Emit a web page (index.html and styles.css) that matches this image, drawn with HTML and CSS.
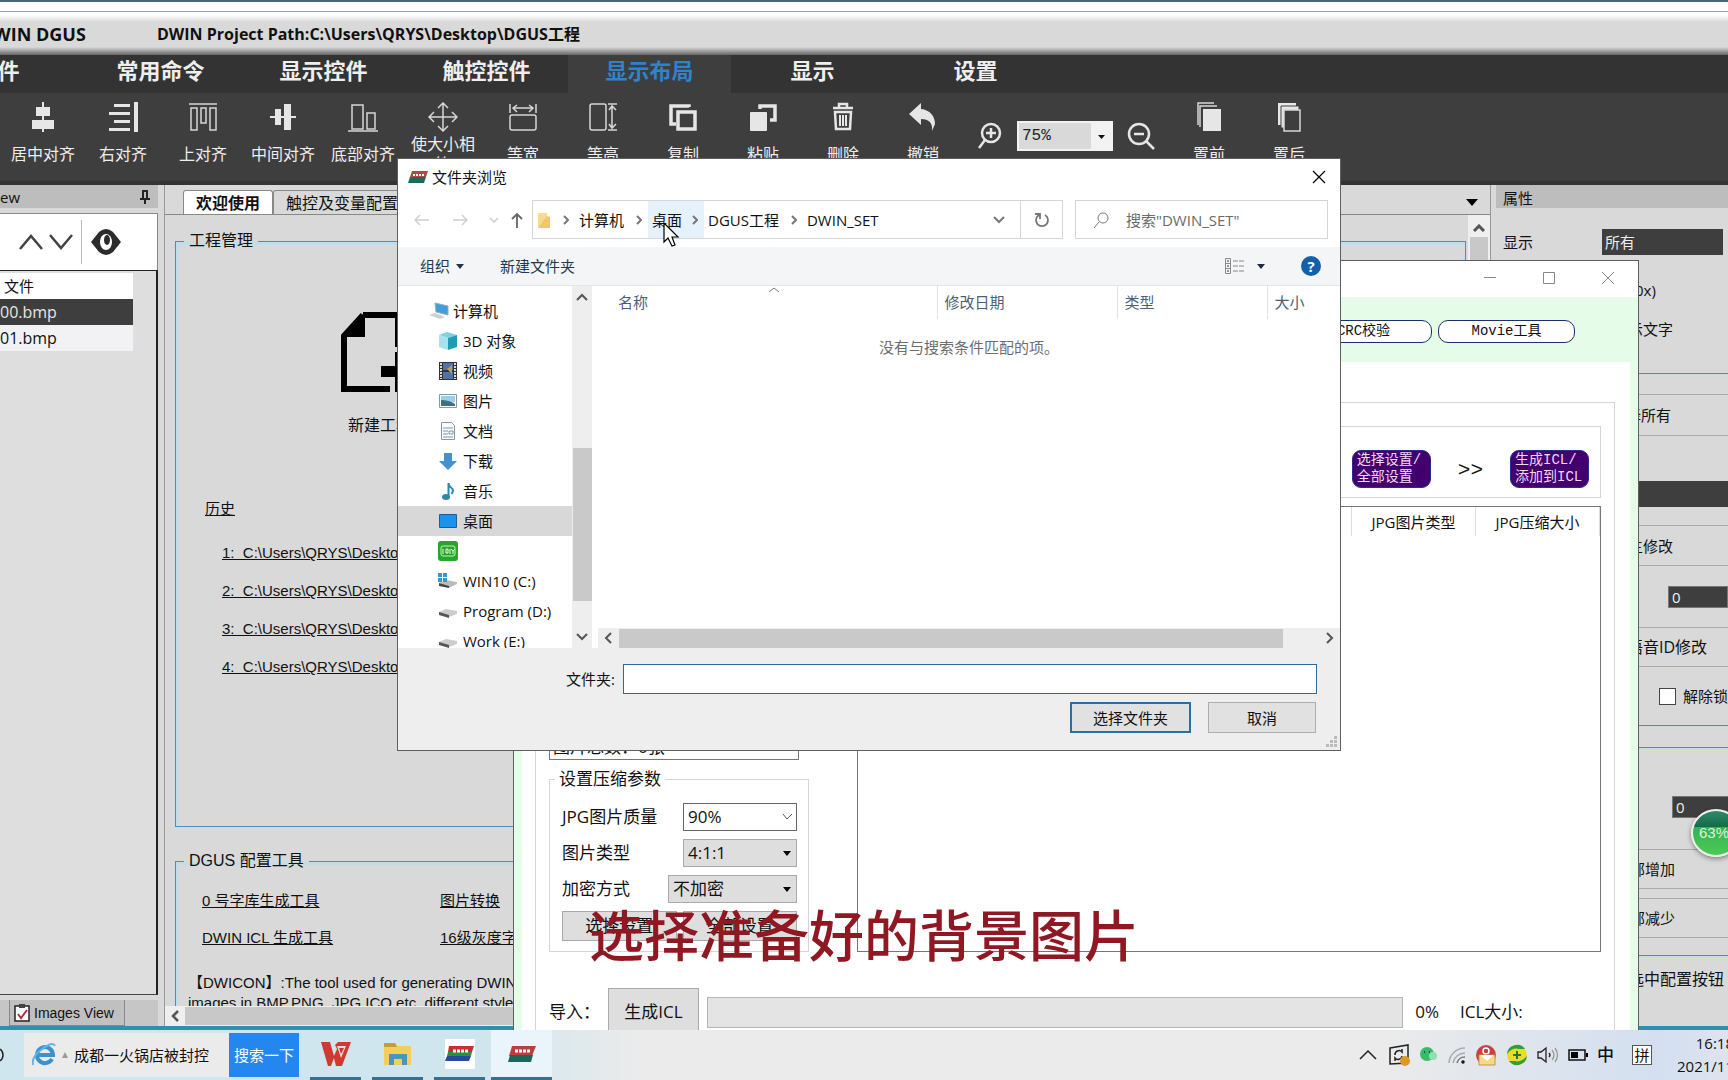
FILE: index.html
```
<!DOCTYPE html>
<html lang="zh-CN">
<head>
  <meta charset="UTF-8" />
  <meta name="viewport" content="width=device-width, initial-scale=1.0" />
  <title>DWIN DGUS</title>
  <link rel="stylesheet" href="styles.css">
</head>

<body>
  <div class="desktop">
    <!-- main DGUS window -->
    <div class="app">
      <div class="app-top"></div>
      <header class="app-title">
        <span class="app-name">DWIN DGUS</span>
        <span class="app-path">DWIN Project Path:C:\Users\QRYS\Desktop\DGUS工程</span>
      </header>

      <nav class="menu">
        <button>文件</button>
        <button>常用命令</button>
        <button>显示控件</button>
        <button>触控控件</button>
        <button class="active">显示布局</button>
        <button>显示</button>
        <button>设置</button>
      </nav>

      <div class="toolbar">
        <button class="tool">
          <svg width="30" height="30" viewBox="0 0 30 30"><path d="M15 0v30" stroke="#e6e6e6" stroke-width="2"/><path d="M8 5h14v9H8zM4 18h22v9H4z" fill="#e6e6e6"/></svg>
          <span>居中对齐</span>
        </button>
        <button class="tool">
          <svg width="30" height="30" viewBox="0 0 30 30" fill="#e6e6e6"><path d="M26 0h4v30h-4zM6 2h16v3H6zM1 10h21v3H1zM6 18h16v3H6zM1 26h21v3H1z"/></svg>
          <span>右对齐</span>
        </button>
        <button class="tool">
          <svg width="30" height="30" viewBox="0 0 30 30" fill="none" stroke="#d6d6d6" stroke-width="1.5"><path d="M1 2h28M3 6h6v22H3zM13 6h5v15h-5zM22 6h6v22h-6z"/></svg>
          <span>上对齐</span>
        </button>
        <button class="tool">
          <svg width="30" height="30" viewBox="0 0 30 30"><path d="M2 15h26" stroke="#e6e6e6" stroke-width="2"/><path d="M7 7h6v16H7zM16 2h7v26h-7z" fill="#e6e6e6"/></svg>
          <span>中间对齐</span>
        </button>
        <button class="tool">
          <svg width="30" height="30" viewBox="0 0 30 30" fill="none" stroke="#d6d6d6" stroke-width="1.5"><path d="M0 29h30M4 3h11v24H4zM19 11h8v16h-8z"/></svg>
          <span>底部对齐</span>
        </button>
        <button class="tool">
          <svg width="30" height="30" viewBox="0 0 30 30" fill="none" stroke="#d6d6d6" stroke-width="1.5"><path d="M15 1v28M1 15h28M10 6l5-5 5 5M10 24l5 5 5-5M6 10l-5 5 5 5M24 10l5 5-5 5"/></svg>
          <span>使大小相等</span>
        </button>
        <button class="tool">
          <svg width="30" height="30" viewBox="0 0 30 30" fill="none" stroke="#d6d6d6" stroke-width="1.5"><path d="M2 2v9M28 2v9M5 6h20M9 3L5 6l4 4M21 3l4 3-4 4"/><rect x="2" y="13" width="26" height="15" rx="2"/></svg>
          <span>等宽</span>
        </button>
        <button class="tool">
          <svg width="30" height="30" viewBox="0 0 30 30" fill="none" stroke="#d6d6d6" stroke-width="1.5"><rect x="2" y="2" width="16" height="26" rx="2"/><path d="M20 2h9M20 28h9M24 4v22M21 8l3-4 4 4M21 22l3 4 4-4"/></svg>
          <span>等高</span>
        </button>
        <button class="tool">
          <svg width="30" height="30" viewBox="0 0 30 30" fill="none" stroke="#e6e6e6"><path d="M21 5V4H3v18h5" stroke-width="3.5"/><path d="M10 10h17v17H10z" stroke-width="3.5"/></svg>
          <span>复制</span>
        </button>
        <button class="tool">
          <svg width="30" height="30" viewBox="0 0 30 30"><path d="M12 7V4h15v14h-5" fill="none" stroke="#e6e6e6" stroke-width="3.5"/><rect x="2" y="10" width="17" height="19" rx="1" fill="#e6e6e6"/></svg>
          <span>粘贴</span>
        </button>
        <button class="tool">
          <svg width="30" height="30" viewBox="0 0 30 30" fill="none" stroke="#e6e6e6" stroke-width="2"><path d="M11 5V2h8v3M5 6h20M7 10h16l-1 17H8z" stroke-width="2.5"/><path d="M12 13v11M15 13v11M18 13v11"/></svg>
          <span>删除</span>
        </button>
        <button class="tool">
          <svg width="30" height="30" viewBox="0 0 30 30" fill="#e6e6e6"><path d="M1 12L13 1v6c9 1 14 7 14 15l-3 7c1-8-3-12-11-12v6z"/></svg>
          <span>撤销</span>
        </button>

        <div class="zoom">
          <button class="zoom-btn" aria-label="放大">
            <svg width="26" height="28" viewBox="0 0 26 28" fill="none" stroke="#e6e6e6" stroke-width="2.5"><circle cx="14" cy="11" r="9"/><path d="M14 6v10M9 11h10M8 18l-6 8"/></svg>
          </button>
          <span class="combo">
            <select class="zoom-select" aria-label="缩放"><option>75%</option></select>
            <svg width="22" height="26" viewBox="0 0 22 26"><path d="M0 0h22v26H0z" fill="#f2f2f2"/><path d="M7 12h7l-3.500 4z" fill="#111"/></svg>
          </span>
          <button class="zoom-btn" aria-label="缩小">
            <svg width="28" height="28" viewBox="0 0 28 28" fill="none" stroke="#e6e6e6" stroke-width="2.500"><circle cx="12" cy="12" r="10"/><path d="M7 12h10M19 19l8 8"/></svg>
          </button>
        </div>

        <button class="tool">
          <svg width="30" height="30" viewBox="0 0 30 30"><path d="M4 23V1h16M6 25V4h17" fill="none" stroke="#d6d6d6" stroke-width="1.5"/><path d="M9 7h18v22H9z" fill="#e6e6e6"/></svg>
          <span>置前</span>
        </button>
        <button class="tool">
          <svg width="30" height="30" viewBox="0 0 30 30"><path d="M4 1h18v22H4z" fill="#e6e6e6"/><path d="M7 4h18v22H7z" fill="#e6e6e6" stroke="#3e3e3e"/><path d="M10 8h16v21H10z" fill="#3e3e3e" stroke="#d6d6d6" stroke-width="1.5"/></svg>
          <span>置后</span>
        </button>
      </div>

      <main class="work">
        <!-- image list -->
        <section class="images">
          <div class="dock-head">
            <span>ew</span>
            <svg width="10" height="14" viewBox="0 0 10 14" fill="none" stroke="#222" stroke-width="2"><path d="M3 8V1h4v7M0 9h10M5 9v5"/></svg>
          </div>
          <div class="image-tools">
            <button aria-label="上移"><svg width="24" height="16" viewBox="0 0 24 16" fill="none" stroke="#444" stroke-width="2.5"><path d="M1 15L12 2l11 13"/></svg></button>
            <button aria-label="下移"><svg width="24" height="16" viewBox="0 0 24 16" fill="none" stroke="#444" stroke-width="2.5"><path d="M1 1l11 13L23 1"/></svg></button>
            <i class="sep"></i>
            <button aria-label="预览"><svg width="30" height="26" viewBox="0 0 30 26"><path d="M0 13L8 3q7-6 14 0l8 10-8 10q-7 6-14 0z" fill="#2c2c2c"/><ellipse cx="15" cy="13" rx="6" ry="8" fill="#fff"/><ellipse cx="16" cy="11" rx="3" ry="5" fill="#2c2c2c"/></svg></button>
          </div>
          <div class="image-list">
            <table>
              <thead><tr><th>文件</th></tr></thead>
              <tbody>
                <tr class="selected"><td>00.bmp</td></tr>
                <tr><td>01.bmp</td></tr>
              </tbody>
            </table>
          </div>
          <div class="dock-tabs">
            <button>
              <svg width="16" height="18" viewBox="0 0 16 18"><rect x="1" y="2" width="14" height="15" fill="#fff" stroke="#222" stroke-width="1.5"/><path d="M5 0h6v4H5z" fill="#444"/><path d="M4 10l3 4 6-8" fill="none" stroke="#a33" stroke-width="2"/></svg>
              Images View
            </button>
          </div>
        </section>

        <!-- welcome page -->
        <section class="center">
          <div class="page-tabs">
            <button class="active">欢迎使用</button>
            <button>触控及变量配置</button>
            <svg width="12" height="7" viewBox="0 0 12 7"><path d="M0 0h12L6 7z" fill="#000"/></svg>
          </div>
          <div class="page">
            <div class="page-body">
              <fieldset class="box project">
                <legend>工程管理</legend>
                <button class="new-project">
                  <svg width="78" height="80" viewBox="0 0 78 80"><path d="M22 3L3 24v53h46M22 3h35v32" fill="none" stroke="#000" stroke-width="6"/><path d="M0 25L22 2h2v23z"/><path d="M54 40h11v14h13v11H65v15H54V65H40V54h14z"/></svg>
                  <span>新建工程</span>
                </button>
                <a class="history" href="#">历史</a>
                <ul class="recent">
                  <li><a href="#">1:&nbsp; C:\Users\QRYS\Desktop</a></li>
                  <li><a href="#">2:&nbsp; C:\Users\QRYS\Desktop</a></li>
                  <li><a href="#">3:&nbsp; C:\Users\QRYS\Desktop</a></li>
                  <li><a href="#">4:&nbsp; C:\Users\QRYS\Desktop</a></li>
                </ul>
              </fieldset>

              <fieldset class="box config">
                <legend>DGUS 配置工具</legend>
                <div class="links">
                  <a href="#">0 号字库生成工具</a>
                  <a href="#">图片转换</a>
                  <a href="#">DWIN ICL 生成工具</a>
                  <a href="#">16级灰度字</a>
                </div>
                <p>【DWICON】:The tool used for generating DWIN<br>images in BMP,PNG, JPG,ICO etc. different styles</p>
              </fieldset>
            </div>
            <div class="page-vscroll">
              <svg width="12" height="8" viewBox="0 0 12 8" fill="none" stroke="#555" stroke-width="3"><path d="M1 7l5-5 5 5"/></svg>
              <i></i>
            </div>
          </div>
          <div class="page-hscroll">
            <svg width="8" height="12" viewBox="0 0 8 12" fill="none" stroke="#555" stroke-width="2.500"><path d="M7 1L2 6l5 5"/></svg>
            <i></i>
          </div>
        </section>

        <!-- properties -->
        <aside class="props">
          <h2>属性</h2>
          <div class="prop show">
            <label for="show">显示</label>
            <select id="show"><option>所有</option></select>
          </div>
          <div class="prop scale">0x)</div>
          <div class="prop txt">示文字</div>
          <div class="rule blue"></div>
          <button class="prop bar all">择所有</button>
          <div class="prop dark"><span></span></div>
          <button class="prop bar edit">主修改</button>
          <div class="prop num"><input type="text" value="0" aria-label="数值"></div>
          <button class="prop bar voice">语音ID修改</button>
          <div class="prop lock"><input type="checkbox" id="lock"><label for="lock">解除锁定</label></div>
          <div class="rule blue"></div>
          <div class="rule blue second"></div>
          <div class="prop num2"><input type="text" value="0" aria-label="步长"></div>
          <button class="prop bar inc">部增加</button>
          <button class="prop bar dec">部减少</button>
          <div class="rule blue third"></div>
          <div class="prop choose">选中配置按钮</div>
        </aside>
      </main>
    </div>

    <!-- ICL tool window -->
    <section class="window tool-window">
      <div class="caption-bar">
        <button aria-label="最小化"><svg width="12" height="12" viewBox="0 0 12 12" stroke="#888"><path d="M0 5.500h12"/></svg></button>
        <button aria-label="最大化"><svg width="12" height="12" viewBox="0 0 12 12" fill="none" stroke="#888"><path d="M.5.5h11v11H.5z"/></svg></button>
        <button aria-label="关闭"><svg width="12" height="12" viewBox="0 0 12 12" stroke="#888"><path d="M0 0l12 12M12 0L0 12"/></svg></button>
      </div>
      <div class="ribbon">
        <button>CRC校验</button>
        <button>Movie工具</button>
      </div>
      <div class="tool-body">
        <div class="tool-panel">
          <div class="steps">
            <button>选择设置/<br>全部设置</button>
            <span>&gt;&gt;</span>
            <button>生成ICL/<br>添加到ICL</button>
          </div>
          <div class="tool-main">
            <div class="tool-left">
              <div class="total">图片总数：0张</div>
              <fieldset class="params">
                <legend>设置压缩参数</legend>
                <div class="param">
                  <label for="quality">JPG图片质量</label>
                  <span class="combo">
                    <select id="quality" class="white"><option>90%</option></select>
                    <svg width="20" height="8" viewBox="0 0 20 8" fill="none" stroke="#555"><path d="M6 1l4 5 5-5"/></svg>
                  </span>
                </div>
                <div class="param">
                  <label for="kind">图片类型</label>
                  <span class="combo">
                    <select id="kind"><option>4:1:1</option></select>
                    <svg width="20" height="8" viewBox="0 0 20 8"><path d="M6 2h8l-4 5z"/></svg>
                  </span>
                </div>
                <div class="param">
                  <label for="encrypt">加密方式</label>
                  <span class="combo wide">
                    <select id="encrypt"><option>不加密</option></select>
                    <svg width="20" height="8" viewBox="0 0 20 8"><path d="M6 2h8l-4 5z"/></svg>
                  </span>
                </div>
                <div class="param-buttons">
                  <button>选择设置</button>
                  <button>全部设置</button>
                </div>
              </fieldset>
            </div>
            <div class="jpg-list">
              <table>
                <thead><tr><th></th><th>JPG图片类型</th><th>JPG压缩大小</th></tr></thead>
              </table>
            </div>
          </div>
          <div class="import">
            <span class="import-label">导入：</span>
            <button>生成ICL</button>
            <div class="progress"></div>
            <span>0%</span>
            <span class="size">ICL大小:</span>
          </div>
        </div>
      </div>
    </section>

    <!-- folder picker -->
    <section class="window dialog">
      <div class="dialog-title">
        <svg width="20" height="12" viewBox="0 0 20 12"><path d="M4 0h16l-2 6H2z" fill="#b04a3a"/><path d="M2 6h16l-2 6H0z" fill="#1c6a5c"/><path d="M5 4h11" stroke="#fff" stroke-width="2" stroke-dasharray="2 1"/></svg>
        <span>文件夹浏览</span>
        <button aria-label="关闭"><svg width="14" height="14" viewBox="0 0 14 14" stroke="#000" stroke-width="1.2"><path d="M1 1l12 12M13 1L1 13"/></svg></button>
      </div>

      <div class="dialog-nav">
        <button class="nav-btn" aria-label="后退"><svg width="16" height="12" viewBox="0 0 16 12" fill="none" stroke="#d0d0d0" stroke-width="1.500"><path d="M15 6H1M6 1L1 6l5 5"/></svg></button>
        <button class="nav-btn" aria-label="前进"><svg width="16" height="12" viewBox="0 0 16 12" fill="none" stroke="#d0d0d0" stroke-width="1.500"><path d="M1 6h14M10 1l5 5-5 5"/></svg></button>
        <button class="nav-small" aria-label="最近"><svg width="8" height="6" viewBox="0 0 8 6" fill="none" stroke="#ccc" stroke-width="1.500"><path d="M0 1l4 4 4-4"/></svg></button>
        <button class="nav-up" aria-label="上一级"><svg width="12" height="16" viewBox="0 0 12 16" fill="none" stroke="#666" stroke-width="1.800"><path d="M6 16V2M1 7l5-5 5 5"/></svg></button>
        <div class="address">
          <svg width="14" height="16" viewBox="0 0 14 16"><path d="M1 1h9v15H1z" fill="#f7dd8b"/><path d="M10 4l3 1v11H1z" fill="#efc964"/></svg>
          <svg class="arrow" width="6" height="10" viewBox="0 0 6 10"><path d="M1 1l4 4-4 4"/></svg>
          <a href="#">计算机</a>
          <svg class="arrow" width="6" height="10" viewBox="0 0 6 10"><path d="M1 1l4 4-4 4"/></svg>
          <span class="hot"><a href="#">桌面</a>
          <svg class="arrow" width="6" height="10" viewBox="0 0 6 10"><path d="M1 1l4 4-4 4"/></svg></span>
          <a href="#">DGUS工程</a>
          <svg class="arrow" width="6" height="10" viewBox="0 0 6 10"><path d="M1 1l4 4-4 4"/></svg>
          <a href="#">DWIN_SET</a>
          <button class="drop" aria-label="历史位置"><svg width="12" height="8" viewBox="0 0 12 8" fill="none" stroke="#777" stroke-width="2"><path d="M1 1l5 5 5-5"/></svg></button>
          <button class="refresh" aria-label="刷新"><svg width="16" height="16" viewBox="0 0 16 16" fill="none" stroke="#777" stroke-width="1.800"><path d="M11 3a6 6 0 1 1-6 0M1 2h5v5"/></svg></button>
        </div>
        <label class="search">
          <svg width="16" height="16" viewBox="0 0 16 16" fill="none" stroke="#777"><circle cx="10" cy="6" r="5"/><path d="M6 10l-5 6"/></svg>
          <input type="text" placeholder='搜索"DWIN_SET"' aria-label="搜索">
        </label>
      </div>

      <div class="dialog-tools">
        <button>组织 <svg width="8" height="5" viewBox="0 0 8 5"><path d="M0 0h8L4 5z" fill="#1f3350"/></svg></button>
        <button>新建文件夹</button>
        <button class="view" aria-label="视图"><svg width="20" height="16" viewBox="0 0 20 16" fill="none" stroke="#888"><path d="M.5.5h5v15h-5zM.5 5.500h5M.5 10.500h5M8 3h5M14 3h5M8 8h5M14 8h5M8 13h5M14 13h5"/><path d="M2 3h2M2 8h2M2 13h2" stroke="#333"/></svg><svg width="8" height="5" viewBox="0 0 8 5"><path d="M0 0h8L4 5z" fill="#1f2a44"/></svg></button>
        <button class="help" aria-label="帮助">?</button>
      </div>

      <div class="dialog-body">
        <ul class="tree">
          <li class="root"><svg width="20" height="18" viewBox="0 0 20 18"><path d="M6 1l13 3v9L7 10z" fill="#3f9fdc" stroke="#9ab"/><path d="M0 13l6-2 10 4-5 2z" fill="#ccd0d4"/></svg>计算机</li>
          <li><svg width="18" height="18" viewBox="0 0 18 18"><path d="M0 3l8-3 10 3-9 3z" fill="#7fd0e0"/><path d="M0 3l9 3v12l-9-3z" fill="#a6e3ee"/><path d="M9 6l9-3v12l-9 3z" fill="#1f9db5"/></svg>3D 对象</li>
          <li><svg width="18" height="18" viewBox="0 0 18 18"><path d="M0 0h18v18H0z" fill="#333"/><path d="M4 1h10v7H4zM4 10h10v7H4z" fill="#5470a8"/><path d="M2 1v16M16 1v16" stroke="#ddd" stroke-width="2" stroke-dasharray="2 1"/><path d="M8 7l5-4v9z" fill="#b9a24f"/></svg>视频</li>
          <li><svg width="18" height="14" viewBox="0 0 18 14"><path d="M.5.5h17v13H.5z" fill="#fff" stroke="#8a98a2"/><path d="M2 2h14v6H2z" fill="#9fcdeb"/><path d="M2 6q8 0 14 4v2H2z" fill="#3f6f84"/></svg>图片</li>
          <li><svg width="18" height="18" viewBox="0 0 18 18"><path d="M2.500.5h10l3 3v14h-13z" fill="#fff" stroke="#8a98a2"/><path d="M4 6h10M4 9h5M4 12h5M4 15h10M10 9h4v3h-4z" stroke="#6a9aa8" fill="none"/></svg>文档</li>
          <li><svg width="18" height="18" viewBox="0 0 18 18"><path d="M5 1h8v8h5l-9 9-9-9h5z" fill="#4391cf"/></svg>下载</li>
          <li><svg width="18" height="18" viewBox="0 0 18 18"><ellipse cx="7" cy="15" rx="4" ry="3" fill="#2f87ad"/><path d="M9.500 15V1q0 3 3 5t0 6" fill="none" stroke="#2f87ad" stroke-width="2"/></svg>音乐</li>
          <li class="selected"><svg width="18" height="14" viewBox="0 0 18 14"><path d="M.5.5h17v13H.5z" fill="#1b93ec" stroke="#265d88"/></svg>桌面</li>
          <li><svg width="20" height="20" viewBox="0 0 20 20"><rect width="20" height="20" rx="3" fill="#28a52d"/><rect x="3" y="5" width="14" height="10" rx="2" fill="none" stroke="#bff5b5"/><path d="M5 8v5M8 8h2v4H8zM12 8v5M13 8l2 2v3M17 8l-2 2" fill="none" stroke="#e2ffd8"/></svg></li>
          <li><svg width="20" height="16" viewBox="0 0 20 16"><path d="M1 10l7-3 11 2v2l-8 4-10-3z" fill="#bbb"/><path d="M1 10l10 3v2L1 13z" fill="#444"/><path d="M0 0h4v4H0zM5 0h4v4H5zM0 5h4v4H0zM5 5h4v4H5z" fill="#2f9bd0"/></svg>WIN10 (C:)</li>
          <li><svg width="20" height="16" viewBox="0 0 20 16"><path d="M1 9l7-3 11 2v3l-8 3-10-3z" fill="#ccc"/><path d="M1 9l10 3v3L1 12z" fill="#555"/></svg>Program (D:)</li>
          <li><svg width="20" height="16" viewBox="0 0 20 16"><path d="M1 9l7-3 11 2v3l-8 3-10-3z" fill="#ccc"/><path d="M1 9l10 3v3L1 12z" fill="#555"/></svg>Work (E:)</li>
        </ul>
        <div class="vscroll">
          <svg width="12" height="8" viewBox="0 0 12 8"><path d="M1 7l5-5 5 5"/></svg>
          <i></i>
          <svg width="12" height="8" viewBox="0 0 12 8"><path d="M1 1l5 5 5-5"/></svg>
        </div>
        <div class="files">
          <svg class="sort" width="10" height="6" viewBox="0 0 10 6" fill="none" stroke="#777"><path d="M0 5l5-4 5 4"/></svg>
          <table>
            <thead><tr><th class="c-name">名称</th><th class="c-date">修改日期</th><th class="c-type">类型</th><th class="c-size">大小</th></tr></thead>
          </table>
          <p>没有与搜索条件匹配的项。</p>
          <div class="hscroll">
            <svg width="8" height="12" viewBox="0 0 8 12"><path d="M7 1L2 6l5 5"/></svg>
            <i></i>
            <svg width="8" height="12" viewBox="0 0 8 12"><path d="M1 1l5 5-5 5"/></svg>
          </div>
        </div>
      </div>

      <div class="dialog-foot">
        <div class="folder-row">
          <label for="folder">文件夹:</label>
          <input type="text" id="folder">
        </div>
        <div class="foot-buttons">
          <button class="primary">选择文件夹</button>
          <button>取消</button>
        </div>
        <svg class="grip" width="12" height="12" viewBox="0 0 12 12" fill="#bbb"><path d="M8 0h3v3H8zM4 4h3v3H4zM8 4h3v3H8zM0 8h3v3H0zM4 8h3v3H4zM8 8h3v3H8z"/></svg>
      </div>
    </section>

    <svg class="pointer" width="18" height="26" viewBox="0 0 18 26"><path d="M2 1v19l4-4 4 8 3-1-3-8h6z" fill="#fff" stroke="#000" stroke-width="1.200"/></svg>

    <div class="ball">63%</div>
    <p class="subtitle">选择准备好的背景图片</p>
  </div>

  <footer class="taskbar">
    <svg class="start" width="4" height="18" viewBox="0 0 4 18" fill="none" stroke="#222" stroke-width="1.500"><path d="M0 3q3 2 3 6t-3 6"/></svg>
    <div class="news">
      <svg width="24" height="24" viewBox="0 0 24 24" fill="none"><path d="M20 16a8 8 0 1 1 1-4H6" stroke="#3a93cf" stroke-width="4"/><path d="M1 22q-2-8 9-16T23 3" stroke="#63b5e2" stroke-width="2"/></svg>
      <svg width="6" height="6" viewBox="0 0 6 6"><path d="M0 6h6L3 0z" fill="#999"/></svg>
      <span>成都一火锅店被封控</span>
      <button>搜索一下</button>
    </div>
    <button class="task wps" aria-label="WPS"><svg width="32" height="26" viewBox="0 0 32 26"><path d="M1 1h9l4 14 3-7-2-4 3-3h13l-9 24h-6l-2-8-3 8H8z" fill="#cf3a30"/><path d="M17 5h9l-5 12z" fill="#f4d9d6"/><path d="M19 7h5l-3 6z" fill="#cf3a30"/></svg></button>
    <button class="task" aria-label="文件资源管理器"><svg width="30" height="24" viewBox="0 0 30 24"><path d="M1 1h11l3 3h13v19H1z" fill="#f3ce5c"/><path d="M1 1h11l2 4H1z" fill="#c79a3e"/><path d="M6 23V12h18v11h-5v-6h-8v6z" fill="#4c93c2"/></svg></button>
    <button class="task" aria-label="DWIN"><svg width="30" height="30" viewBox="0 0 30 30"><path d="M0 0h30v30H0z" fill="#fff"/><path d="M4 7h25l-2 6H3z" fill="#c9302c"/><path d="M3 13h24l-1 4H2z" fill="#2f8f3a"/><path d="M2 17h24l-2 5H0z" fill="#234a9c"/><path d="M8 12h15" stroke="#fff" stroke-width="3" stroke-dasharray="3 1"/></svg></button>
    <button class="task open" aria-label="DWIN ICL"><svg width="28" height="18" viewBox="0 0 28 18"><path d="M4 1h24l-4 10H1z" fill="#b8403a"/><path d="M2 10h23l-2 7H0z" fill="#1d665e"/><path d="M7 6h15" stroke="#fff" stroke-width="3" stroke-dasharray="3 1"/></svg></button>

    <div class="tray">
      <svg width="18" height="12" viewBox="0 0 18 12" fill="none" stroke="#222" stroke-width="1.500"><path d="M1 10l8-8 8 8"/></svg>
      <svg width="22" height="22" viewBox="0 0 22 22"><path d="M2 4l18-3v18l-18 1z" fill="none" stroke="#222" stroke-width="1.500"/><path d="M7 11a4 4 0 0 1 7-3V5M14 12a4 4 0 0 1-7 2v3" fill="none" stroke="#222" stroke-width="1.500"/><circle cx="17" cy="17" r="5" fill="#dd982c"/></svg>
      <svg width="20" height="20" viewBox="0 0 20 20"><circle cx="8" cy="9" r="7" fill="#35bd6c"/><circle cx="14" cy="11" r="4" fill="#8fe0ae"/><path d="M5 7h1M10 7h1" stroke="#0f5c30" stroke-width="2"/></svg>
      <svg width="18" height="18" viewBox="0 0 18 18" fill="none" stroke="#777" stroke-width="1.500"><path d="M1 17A16 16 0 0 1 17 2M5 17A12 12 0 0 1 17 7" stroke="#aaa"/><path d="M9 17a8 8 0 0 1 8-6"/><circle cx="15" cy="16" r="1" fill="#111" stroke="#111"/></svg>
      <svg width="22" height="22" viewBox="0 0 22 22"><circle cx="11" cy="11" r="10" fill="#c8404a"/><circle cx="11" cy="7" r="3" fill="none" stroke="#fff" stroke-width="1.500"/><path d="M4 11h16v10H4z" fill="#f5d98a" stroke="#c9973a"/><path d="M5 11l7 6 7-6z" fill="#fff"/></svg>
      <svg width="22" height="22" viewBox="0 0 22 22"><circle cx="11" cy="11" r="10" fill="#e8dc2c"/><path d="M1 10a10 10 0 0 1 18-5l-6 0q-6-2-12 5M21 12a10 10 0 0 1-18 5h6q6 2 12-5" fill="#2f9f3c"/><path d="M11 7v8M7 11h8" stroke="#1f7a2c" stroke-width="2"/></svg>
      <svg width="22" height="18" viewBox="0 0 22 18" fill="none" stroke="#222" stroke-width="1.300"><path d="M1 6h3l5-4v14l-5-4H1zM12 7q2 2 0 4"/><path d="M15 4q4 5 0 10M18 2q5 7 0 14" stroke="#999"/></svg>
      <svg width="20" height="14" viewBox="0 0 20 14"><path d="M1 2h16v10H1z" fill="none" stroke="#111" stroke-width="1.500"/><path d="M3 4h7v6H3zM18 5h2v4h-2z"/></svg>
      <span class="ime">中</span>
      <span class="pin">拼</span>
      <div class="clock"><span>16:18</span><span>2021/11</span></div>
    </div>
  </footer>
</body>
</html>
```
FILE: styles.css
```
* {
  box-sizing: border-box;
}

body {
  margin: 0;
  height: 100vh;
  display: flex;
  flex-direction: column;
  overflow: hidden;
  font-family: "Open Sans", "Noto Sans CJK SC", sans-serif;
  font-size: 15px;
  line-height: 20px;
  color: #111;
}

button, input, select {
  font: inherit;
  color: inherit;
  margin: 0;
  padding: 0;
  border: none;
  border-radius: 0;
  background: none;
}

select {
  appearance: none;
}

ul, p, h2 {
  margin: 0;
  padding: 0;
  list-style: none;
}

a {
  color: inherit;
}

table {
  border-collapse: collapse;
}

th {
  font-weight: normal;
  text-align: left;
}

svg {
  display: block;
  flex: none;
}

.desktop {
  flex: 1;
  min-height: 0;
  position: relative;
  overflow: hidden;
}

/* main window */
.app {
  height: 100%;
  display: flex;
  flex-direction: column;
  background: #d9d9d9;
  border-bottom: 4px solid #2f8fae;
}

.app-top {
  height: 12px;
  background: #fff;
  border-top: 2px solid #4a6578;
  border-bottom: 1px solid #98a2a8;
}

.app-title {
  height: 43px;
  display: flex;
  align-items: center;
  background: linear-gradient(#fff 3px, #d9d9d9 10px, #d9d9d9 35px, #666 43px);
  font-size: 16px;
  font-weight: bold;
  white-space: nowrap;
}

.app-name {
  width: 177px;
  margin-left: -20px;
  font-size: 18px;
}

.menu {
  height: 38px;
  display: flex;
  background: #333;
}

.menu button {
  width: 163px;
  height: 38px;
  padding-bottom: 4px;
  flex: none;
  color: #eee;
  font-family: "Liberation Serif", "Noto Sans CJK SC", serif;
  font-size: 22px;
  font-weight: bold;
}

.menu button:first-child {
  margin-left: -84px;
}

.menu .active {
  background: #3e3e3e;
  color: #2f83c9;
}

.toolbar {
  height: 92px;
  display: flex;
  padding: 9px 0 0 3px;
  background: #3e3e3e;
  border-bottom: 4px solid #333;
  color: #eee;
  font-size: 16px;
}

.tool {
  width: 80px;
  height: 72px;
  display: flex;
  flex-direction: column;
  align-items: center;
  gap: 2px;
}

.tool span {
  width: 72px;
  height: 40px;
  display: flex;
  align-items: center;
  justify-content: center;
}

.zoom {
  width: 206px;
  height: 68px;
  display: flex;
  align-items: center;
  justify-content: center;
  gap: 14px;
}

.zoom-btn {
  height: 28px;
}

.combo {
  display: grid;
  align-items: center;
}

.combo select, .combo svg {
  grid-area: 1 / 1;
}

.combo svg {
  justify-self: end;
  pointer-events: none;
}

.zoom-select {
  width: 96px;
  height: 30px;
  padding-left: 3px;
  border: 2px solid #f2f2f2;
  background: #d9d9d9;
  color: #222;
  font-family: "Liberation Mono", monospace;
  font-size: 16px;
}

.work {
  flex: 1;
  min-height: 0;
  display: grid;
  grid-template-columns: 165px 1fr 237px;
}

.images {
  display: flex;
  flex-direction: column;
  min-height: 0;
  padding-right: 6px;
  border-right: 1px solid #999;
}

.dock-head {
  height: 23px;
  display: flex;
  align-items: center;
  justify-content: space-between;
  padding-right: 8px;
  background: #bdbdbd;
}

.image-tools {
  height: 57px;
  margin-top: 5px;
  display: flex;
  align-items: center;
  gap: 6px;
  padding-left: 19px;
  background: #fff;
  border-top: 1px solid #888;
  border-right: 1px solid #888;
}

.image-tools .sep {
  width: 1px;
  height: 44px;
  margin: 0 3px 0 2px;
  background: #bbb;
}

.image-list {
  flex: 1;
  background: #dedede;
  border-top: 1px solid #222;
  border-right: 2px solid #222;
  border-bottom: 1px solid #444;
  padding-top: 2px;
}

.image-list table {
  width: 133px;
}

.image-list th {
  height: 26px;
  padding: 0 0 0 4px;
  background: #fff;
}

.image-list td {
  height: 26px;
  padding: 0;
  background: #f2f2f4;
  font-size: 16px;
}

.image-list .selected td {
  background: #3e3e3e;
  color: #e6e6e6;
}

.dock-tabs {
  height: 31px;
  padding: 5px 0 0 9px;
  background: #c6c6c6;
  border-top: 5px solid #d9d9d9;
}

.dock-tabs button {
  height: 26px;
  margin-top: -5px;
  display: flex;
  align-items: center;
  gap: 4px;
  padding: 0 10px 0 4px;
  border: 1px solid #888;
  border-top: none;
  background: #c0c0c0;
  font-family: "Liberation Sans", sans-serif;
  font-size: 14px;
  white-space: nowrap;
}

.center {
  min-width: 0;
  min-height: 0;
  display: flex;
  flex-direction: column;
  border-right: 1px solid #999;
}

.page-tabs {
  height: 30px;
  display: flex;
  align-items: flex-end;
  padding: 0 12px 0 18px;
  border-bottom: 1px solid #888;
}

.page-tabs button {
  height: 24px;
  padding: 0 12px;
  border: 1px solid #888;
  border-bottom: none;
  border-radius: 3px 3px 0 0;
  font-size: 16px;
  line-height: 18px;
}

.page-tabs .active {
  background: #fff;
  font-weight: bold;
}

.page-tabs svg {
  margin-left: auto;
  margin-bottom: 8px;
}

.page {
  flex: 1;
  min-height: 0;
  display: flex;
}

.page-body {
  flex: 1;
  overflow: hidden;
  padding: 16px 2px 0 10px;
}

.box {
  min-width: 0;
  margin: 0;
  padding: 0 0 0 12px;
  border: 1px solid #4f8db3;
  box-shadow: inset 3px 3px 0 #c3dde8;
  font-family: "Liberation Sans", "Noto Sans CJK SC", sans-serif;
  font-size: 15px;
}

.box legend {
  padding: 0 5px;
  margin-left: -4px;
  font-size: 16px;
}

.project {
  height: 596px;
}

.new-project {
  width: 148px;
  margin: 61px 0 0 118px;
  display: flex;
  flex-direction: column;
  align-items: center;
  gap: 24px;
  font-size: 16px;
}

.history {
  display: block;
  width: 30px;
  margin: 63px 0 15px 17px;
}

.recent {
  margin-left: 34px;
  line-height: 38px;
}

.config {
  height: 240px;
  margin-top: 24px;
}

.links {
  display: grid;
  grid-template-columns: 238px 1fr;
  padding: 11px 0 17px 14px;
  line-height: 37px;
}

.page-vscroll {
  width: 22px;
  display: flex;
  flex-direction: column;
  align-items: center;
  padding-top: 9px;
  background: #efefef;
}

.page-vscroll i {
  flex: 1;
  width: 18px;
  margin-top: 5px;
  background: #c8c8c8;
}

.page-hscroll {
  height: 20px;
  display: flex;
  align-items: center;
  background: #efefef;
  padding: 1px 22px 1px 6px;
  gap: 6px;
}

.page-hscroll i {
  flex: 1;
  height: 18px;
  background: #c8c8c8;
}

/* properties column, mostly behind the tool window */
.props {
  min-height: 0;
  overflow: hidden;
  padding-left: 5px;
  display: flex;
  flex-direction: column;
}

.props > * {
  flex: none;
}

.props h2 {
  height: 23px;
  padding: 3px 0 0 7px;
  background: #bdbdbd;
  font-size: 15px;
  font-weight: normal;
}

.prop {
  display: flex;
  align-items: center;
  padding-left: 132px;
  height: 40px;
  white-space: nowrap;
}

.show {
  height: 68px;
  justify-content: space-between;
  padding: 0 5px 0 7px;
}

.show select {
  width: 121px;
  height: 26px;
  padding-left: 3px;
  background: #3e3e3e;
  color: #eee;
}

.scale {
  height: 28px;
  padding-left: 139px;
}

.txt {
  height: 50px;
}

.rule {
  height: 2px;
  margin-top: 19px;
  background: #4f8db3;
  border-bottom: 1px solid #c3dde8;
}

.bar {
  border-top: 1px solid #aaa;
  border-bottom: 1px solid #aaa;
}

.all {
  height: 42px;
  margin-top: 19px;
  padding-left: 130px;
}

.dark {
  margin: 45px 0 18px;
  height: 26px;
  padding: 0;
}

.dark span {
  flex: 1;
  height: 26px;
  background: #3e3e3e;
}

.edit {
  height: 41px;
}

.voice {
  padding-left: 131px;
  font-size: 16px;
}

.prop input[type="text"] {
  width: 60px;
  height: 22px;
  padding-left: 3px;
  background: #3e3e3e;
  border: 1px solid #777;
  color: #eee;
}

.num {
  height: 61px;
  padding-left: 172px;
}

.lock {
  height: 58px;
  padding-left: 163px;
  gap: 7px;
}

.lock input {
  flex: none;
  appearance: none;
  width: 17px;
  height: 17px;
  background: #fff;
  border: 1px solid #444;
}

.lock + .rule {
  margin-top: 0;
}

.second {
  margin-top: 20px;
}

.num2 {
  height: 100px;
  padding-left: 176px;
  padding-top: 16px;
}

.inc, .dec {
  height: 40px;
  padding-left: 134px;
}

.dec {
  margin-top: 9px;
}

.third {
  margin-top: 17px;
}

.choose {
  height: 44px;
  font-size: 16px;
}

/* floating windows */
.window {
  position: absolute;
  background: #fff;
  border: 1px solid #5f5f5f;
  display: flex;
  flex-direction: column;
}

.tool-window {
  left: 513px;
  right: 89px;
  top: 260px;
  bottom: -10px;
}

.caption-bar {
  height: 36px;
  display: flex;
  align-items: center;
  justify-content: flex-end;
  gap: 47px;
  padding: 0 24px 2px 0;
}

.ribbon {
  height: 65px;
  display: flex;
  align-items: center;
  justify-content: flex-end;
  gap: 6px;
  padding: 3px 63px 0 0;
  background: #e4fce8;
}

.ribbon button {
  width: 137px;
  height: 23px;
  border: 1px solid #1d2f6a;
  border-radius: 10px;
  background: #fff;
  font-family: "Liberation Mono", "Noto Sans CJK SC", monospace;
  font-size: 14px;
}

.tool-body {
  flex: 1;
  min-height: 0;
  display: flex;
  padding: 40px 15px 0 13px;
  border: solid #e4fce8;
  border-width: 0 8px;
}

.tool-panel {
  flex: 1;
  min-width: 0;
  display: flex;
  flex-direction: column;
  padding: 23px 13px 3px 13px;
  border: 1px solid #d5d5d5;
  border-bottom: none;
}

.steps {
  height: 72px;
  display: flex;
  align-items: center;
  justify-content: flex-end;
  gap: 27px;
  padding: 13px 11px 0 0;
  border: 1px solid #d5d5d5;
}

.steps button {
  width: 79px;
  height: 38px;
  padding-left: 4px;
  border: 1px solid #2b2b8a;
  border-radius: 9px;
  background: #42006e;
  color: #f3d9f5;
  font-family: "Liberation Mono", "Noto Sans CJK SC", monospace;
  font-size: 14px;
  line-height: 17px;
  text-align: left;
  white-space: nowrap;
}

.steps span {
  padding-top: 4px;
  font-family: "Liberation Mono", monospace;
  font-size: 21px;
}

.tool-main {
  flex: 1;
  min-height: 0;
  margin-top: 8px;
  display: flex;
  gap: 48px;
}

.tool-left {
  width: 260px;
  display: flex;
  flex-direction: column;
  justify-content: flex-end;
  font-size: 17px;
}

.total {
  width: 250px;
  height: 24px;
  padding-left: 3px;
  border: 1px solid #777;
}

.params {
  margin: 9px 0 0;
  min-width: 0;
  padding: 14px 11px 10px 12px;
  border: 1px solid #d5d5d5;
}

.params legend {
  margin-left: -7px;
  padding: 0 4px;
}

.param {
  height: 28px;
  margin-bottom: 8px;
  display: flex;
  align-items: center;
  justify-content: space-between;
}

.param select {
  width: 114px;
  height: 28px;
  padding-left: 4px;
  border: 1px solid #aaa;
  background: #dedede;
}

.param .white {
  background: #fff;
  border-color: #666;
}

.param .wide select {
  width: 129px;
}

.param-buttons {
  display: flex;
  gap: 6px;
}

.param-buttons button {
  flex: 1;
  height: 30px;
  background: #dedede;
  border: 1px solid #aaa;
}

.jpg-list {
  flex: 1;
  border: 1px solid #777;
}

.jpg-list table {
  width: 100%;
  table-layout: fixed;
}

.jpg-list th {
  width: 124px;
  height: 29px;
  padding: 0;
  border-right: 1px solid #ddd;
  text-align: center;
}

.jpg-list th:first-child {
  width: auto;
}

.import {
  height: 48px;
  margin-top: 36px;
  display: flex;
  align-items: center;
  font-size: 17px;
}

.import-label {
  width: 59px;
}

.import button {
  width: 91px;
  height: 48px;
  background: #dedede;
  border: 1px solid #aaa;
}

.progress {
  flex: 1;
  height: 31px;
  margin: 0 12px 0 8px;
  background: #e4e4e4;
  border: 1px solid #b5b5b5;
}

.size {
  width: 141px;
  margin-left: 21px;
}

.dialog {
  left: 397px;
  right: 387px;
  top: 158px;
}

.dialog-title {
  height: 36px;
  display: flex;
  align-items: center;
  gap: 4px;
  padding: 0 14px 0 10px;
}

.dialog-title button {
  margin-left: auto;
}

.dialog-nav {
  display: flex;
  align-items: center;
  padding: 5px 12px 8px 16px;
}

.nav-btn {
  width: 38px;
}

.nav-small {
  width: 21px;
}

.nav-up {
  width: 21px;
}

.address {
  flex: 1;
  height: 39px;
  display: flex;
  align-items: center;
  padding-left: 4px;
  border: 1px solid #d5d5d5;
}

.address a {
  padding: 0 4px;
  text-decoration: none;
}

.arrow {
  margin: 0 6px 0 8px;
  fill: none;
  stroke: #777;
  stroke-width: 2px;
}

.address > svg:first-child {
  margin-right: 4px;
}

.hot {
  height: 37px;
  display: flex;
  align-items: center;
  background: #e6f2fb;
}

.hot .arrow {
  margin: 0 6px;
}

.address button {
  width: 42px;
  height: 37px;
  display: flex;
  align-items: center;
  justify-content: center;
}

.address .drop {
  margin-left: auto;
}

.address .refresh {
  border-left: 1px solid #d5d5d5;
}

.search {
  width: 253px;
  height: 39px;
  margin-left: 12px;
  display: flex;
  align-items: center;
  gap: 17px;
  padding: 0 8px 0 17px;
  border: 1px solid #d5d5d5;
}

.search input {
  flex: 1;
  min-width: 0;
  outline: none;
}

.search input::placeholder {
  color: #6b6b6b;
}

.dialog-tools {
  height: 39px;
  display: flex;
  align-items: center;
  gap: 36px;
  padding: 0 19px 0 22px;
  background: #f3f5f6;
  border-bottom: 1px solid #e3e6e8;
  color: #26384f;
}

.dialog-tools button {
  display: flex;
  align-items: center;
  gap: 6px;
}

.dialog-tools .view {
  margin-left: auto;
  gap: 12px;
}

.dialog-tools .help {
  width: 20px;
  height: 20px;
  justify-content: center;
  border-radius: 50%;
  background: #1260a8;
  color: #fff;
  font-weight: bold;
}

.dialog-body {
  height: 362px;
  display: flex;
}

.tree {
  width: 174px;
  overflow: hidden;
  padding-top: 10px;
}

.tree li {
  height: 30px;
  display: flex;
  align-items: center;
  gap: 5px;
  padding-left: 40px;
}

.tree li svg {
  width: 20px;
}

.tree .root {
  padding-left: 31px;
  gap: 4px;
}

.tree .selected {
  background: #d8d8d8;
}

.vscroll {
  width: 20px;
  display: flex;
  flex-direction: column;
  align-items: center;
  justify-content: space-between;
  padding: 7px 0;
  background: #eee;
}

.vscroll svg, .hscroll svg {
  fill: none;
  stroke: #555;
  stroke-width: 2px;
}

.vscroll i {
  width: 19px;
  height: 153px;
  margin-top: 114px;
  background: #c9c9c9;
}

.files {
  flex: 1;
  position: relative;
  display: flex;
  flex-direction: column;
  padding-left: 6px;
}

.sort {
  position: absolute;
  left: 177px;
  top: 1px;
}

.files table {
  width: 100%;
  table-layout: fixed;
  color: #4c5f77;
}

.files th {
  height: 33px;
  padding: 0 0 2px 7px;
  border-right: 1px solid #e2e2e2;
}

.files th:last-child {
  border-right: none;
}

.files .c-name {
  padding-left: 20px;
}

.c-date {
  width: 180px;
}

.c-type {
  width: 150px;
}

.c-size {
  width: 73px;
}

.files p {
  margin-top: 18px;
  text-align: center;
  color: #6d6d6d;
}

.hscroll {
  height: 20px;
  margin-top: auto;
  display: flex;
  align-items: center;
  gap: 7px;
  padding: 0 6px;
  background: #eee;
}

.hscroll i {
  flex: 1;
  height: 19px;
  margin-right: 36px;
  background: #c9c9c9;
}

.dialog-foot {
  position: relative;
  height: 102px;
  padding: 16px 23px 0 168px;
  background: #eee;
}

.folder-row {
  display: flex;
  align-items: center;
  gap: 8px;
}

.folder-row input {
  flex: 1;
  height: 30px;
  background: #fff;
  border: 1px solid #2a6a9c;
}

.foot-buttons {
  display: flex;
  justify-content: flex-end;
  gap: 17px;
  margin-top: 8px;
  padding-right: 1px;
}

.foot-buttons button {
  width: 108px;
  height: 31px;
  background: #e1e1e1;
  border: 1px solid #adadad;
}

.foot-buttons .primary {
  width: 121px;
  border: 2px solid #2a6f9f;
}

.grip {
  position: absolute;
  right: 2px;
  bottom: 2px;
}

.pointer {
  position: absolute;
  left: 662px;
  top: 222px;
}

.ball {
  position: absolute;
  right: -13px;
  top: 809px;
  width: 50px;
  height: 48px;
  padding-left: 6px;
  border: 2px solid #eee;
  border-radius: 50%;
  background: linear-gradient(#2d8a66, #136b4b 36%, #35b252 37%, #4ccb55);
  box-shadow: 0 2px 5px rgba(0, 0, 0, 0.4);
  color: #d8f5da;
  font-family: "Liberation Sans", sans-serif;
  font-size: 15px;
  line-height: 44px;
}

.subtitle {
  position: absolute;
  left: 0;
  right: 0;
  bottom: 62px;
  text-align: center;
  color: #8f1822;
  font-size: 55px;
  font-weight: 500;
  line-height: 66px;
}

/* taskbar */
.taskbar {
  height: 50px;
  display: flex;
  align-items: center;
  overflow: hidden;
  background: linear-gradient(90deg, #cfe6ee, #cfe6ee 480px, #ebebeb 640px, #ebebeb 80%, #d3dff0 96%, #dfe3ee);
  white-space: nowrap;
}

.news {
  height: 44px;
  margin: 0 11px 0 20px;
  display: flex;
  align-items: center;
  gap: 6px;
  padding-left: 8px;
  background: #ebebeb;
}

.news span {
  width: 149px;
}

.news button {
  width: 70px;
  height: 44px;
  background: #2487f0;
  color: #fff;
}

.task {
  width: 51px;
  height: 50px;
  margin-right: 11px;
  display: flex;
  align-items: center;
  justify-content: center;
  border-bottom: 3px solid #366f8f;
}

.open {
  width: 61px;
  margin-left: -5px;
  background: #e9f5fa;
}

.tray {
  margin-left: auto;
  display: flex;
  align-items: center;
  gap: 9px;
}

.tray svg:first-child {
  margin-right: 2px;
}

.ime {
  font-size: 17px;
  font-weight: 500;
}

.pin {
  width: 20px;
  height: 20px;
  margin-left: 9px;
  border: 1px solid #555;
  background: #fff;
  text-align: center;
  line-height: 18px;
}

.clock {
  width: 73px;
  display: flex;
  flex-direction: column;
  align-items: flex-end;
  line-height: 23px;
  margin-right: -6px;
}
```
